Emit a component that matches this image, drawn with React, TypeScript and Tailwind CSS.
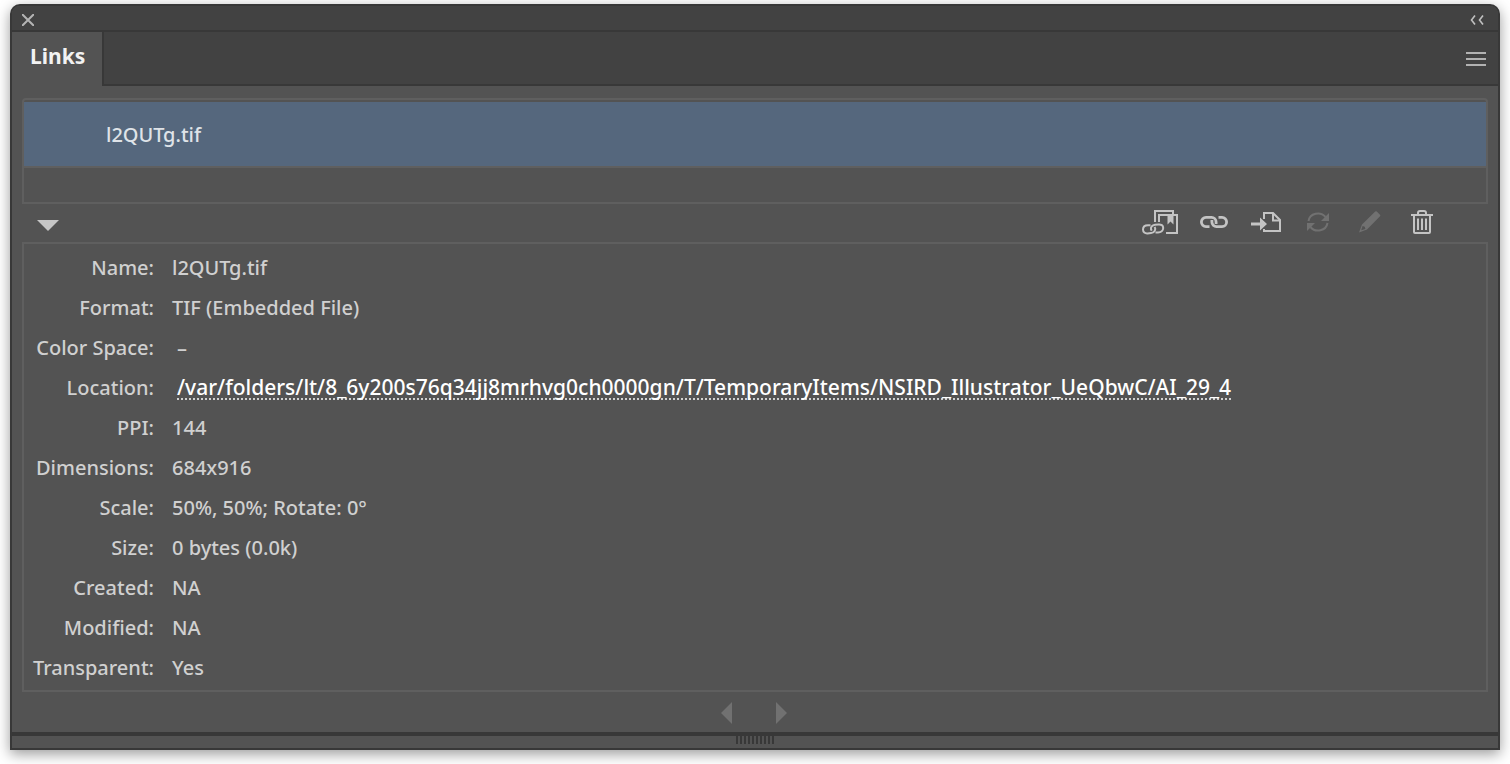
import { clsx } from 'clsx';
import type { ReactNode } from 'react';
import { useState } from 'react';

type LinkDetail = {
  isPath?: boolean;
  label: string;
  value: string;
};

type ToolButtonProps = {
  children: ReactNode;
  disabled?: boolean;
  label: string;
  wide?: boolean;
};

const linkDetails: LinkDetail[] = [
  { label: 'Name:', value: 'l2QUTg.tif' },
  { label: 'Format:', value: 'TIF (Embedded File)' },
  { label: 'Color Space:', value: '–' },
  {
    isPath: true,
    label: 'Location:',
    value:
      '/var/folders/lt/8_6y200s76q34jj8mrhvg0ch0000gn/T/TemporaryItems/NSIRD_Illustrator_UeQbwC/AI_29_4',
  },
  { label: 'PPI:', value: '144' },
  { label: 'Dimensions:', value: '684x916' },
  { label: 'Scale:', value: '50%, 50%; Rotate: 0°' },
  { label: 'Size:', value: '0 bytes (0.0k)' },
  { label: 'Created:', value: 'NA' },
  { label: 'Modified:', value: 'NA' },
  { label: 'Transparent:', value: 'Yes' },
];

function ToolButton({ children, disabled = false, label, wide = false }: ToolButtonProps) {
  return (
    <button
      aria-label={label}
      className={clsx(
        'flex h-9 items-center justify-center',
        wide ? 'w-14' : 'w-[52px]',
        disabled ? 'text-[#717171]' : 'text-[#c4c4c4]',
      )}
      disabled={disabled}
      type="button"
    >
      {children}
    </button>
  );
}

function RelinkLibraryIcon() {
  return (
    <svg aria-hidden="true" fill="none" height="25" stroke="currentColor" strokeWidth="2" viewBox="0 0 36 25" width="36">
      <path d="M13 12V1H31V5" />
      <path d="M17 12V5H35V23H24" />
      <path d="M25.5 5h6v9.5l-3-3-3 3z" fill="currentColor" stroke="none" />
      <path d="M8.5 15.2H6C3 15.2 1 17 1 19.6S3 23.6 5.5 23.4L9 23C12 22.6 13.6 20.5 13.2 18.2L12.6 17" />
      <path d="M13.5 22.4H16C19 22.4 21.2 20.6 21.2 18S19.2 14.2 16.5 14.4L13 14.8C10 15.2 8.6 17.2 9 19.4L9.8 20.6" />
    </svg>
  );
}

function RelinkIcon() {
  return (
    <svg aria-hidden="true" fill="none" height="12" stroke="currentColor" strokeWidth="2.8" viewBox="0 0 28 12" width="28">
      <path d="M9.5 10.6H6A4.6 4.6 0 0 1 6 1.4H11.5A4.6 4.6 0 0 1 16.1 6V8" />
      <path d="M18.5 1.4H22A4.6 4.6 0 0 1 22 10.6H16.5A4.6 4.6 0 0 1 11.9 6V4" />
    </svg>
  );
}

function GoToLinkIcon() {
  return (
    <svg aria-hidden="true" fill="none" height="20" stroke="currentColor" strokeWidth="2" viewBox="0 0 30 20" width="30">
      <path d="M13 7V1H22L29 8V19H13V17" />
      <path d="M22 1V8.5H29" />
      <path d="M0 10.5H9V5.5L16 12L9 18.5V13.5H0Z" fill="currentColor" stroke="none" />
    </svg>
  );
}

function UpdateLinkIcon() {
  return (
    <svg aria-hidden="true" fill="none" height="20" stroke="currentColor" strokeWidth="2" viewBox="0 0 22 20" width="22">
      <path d="M1.5 9A9.5 8.8 0 0 1 18.5 5" />
      <path d="M20.5 11A9.5 8.8 0 0 1 3.5 15" />
      <path d="M22 1V9H14ZM0 19V11H8Z" fill="currentColor" stroke="none" />
    </svg>
  );
}

function EditOriginalIcon() {
  return (
    <svg aria-hidden="true" fill="currentColor" height="22" viewBox="0 0 22 22" width="22">
      <path
        d="M16.2.5Q17 0 17.8.5L21 3.7Q21.7 4.5 21 5.2L8 18.5L0 21.5L3 13.5ZM3.6 15L2.2 19.2L6.4 18L5.8 15.8Z"
        fillRule="evenodd"
      />
    </svg>
  );
}

function TrashIcon() {
  return (
    <svg aria-hidden="true" fill="none" height="24" stroke="currentColor" strokeWidth="2" viewBox="0 0 22 24" width="22">
      <path d="M0 5H22M7 5V3Q7 1 9 1H13Q15 1 15 3V5" />
      <path d="M3 5V22Q3 23 4 23H18Q19 23 19 22V5M7 8.5V20M11 8.5V20M15 8.5V20" />
    </svg>
  );
}

export default function App() {
  const [isDetailOpen, setIsDetailOpen] = useState(true);

  return (
    <div className="px-[10px] pt-1 pb-[14px] font-['Noto_Sans','Open_Sans',sans-serif] text-xl font-medium text-[#d0d0d0]">
      <section
        aria-label="Links"
        className="overflow-hidden rounded-t-[10px] border-2 border-[#383838] bg-[#535353] shadow-[0_4px_14px_rgba(0,0,0,0.4)]"
      >
        <header className="bg-[#424242]">
          <div className="flex h-[26px] items-center justify-between border-b-2 border-[#383838] px-[10px] pt-1">
            <button aria-label="Close" className="text-[#b4b4b4]" type="button">
              <svg aria-hidden="true" height="12" stroke="currentColor" strokeWidth="2" viewBox="0 0 12 12" width="12">
                <path d="M0 0L12 12M12 0L0 12" />
              </svg>
            </button>
            <button aria-label="Collapse panel" className="pr-1 text-[#c0c0c0]" type="button">
              <svg aria-hidden="true" fill="none" height="10" stroke="currentColor" strokeWidth="1.6" viewBox="0 0 14 10" width="14">
                <path d="M5 .5L1.5 5L5 9.5M13 .5L9.5 5L13 9.5" />
              </svg>
            </button>
          </div>
          <div className="flex h-[54px] items-stretch">
            <button
              className="border-r-2 border-[#383838] bg-[#535353] pr-[17px] pb-1 pl-[18px] text-[21px] font-bold text-[#f2f2f2]"
              type="button"
            >
              Links
            </button>
            <div className="flex flex-1 items-center justify-end border-b-2 border-[#383838] pt-[2px] pr-3">
              <button aria-label="Panel menu" className="text-[#b2b2b2]" type="button">
                <svg aria-hidden="true" height="14" stroke="currentColor" strokeWidth="2" viewBox="0 0 20 14" width="20">
                  <path d="M0 1H20M0 7H20M0 13H20" />
                </svg>
              </button>
            </div>
          </div>
        </header>

        <main className="px-[10px] pt-3">
          <ul className="h-[106px] rounded-t border-2 border-[#5f5f5f] pt-[2px]">
            <li className="border-b-2 border-[#5f5f5f]">
              <button
                className="flex h-16 w-full items-center bg-[#55677d] pt-[2px] pl-[82px] text-left text-[#dfe3e8]"
                type="button"
              >
                l2QUTg.tif
              </button>
            </li>
          </ul>

          <div className="flex h-[38px] items-center justify-between pr-10 pl-[14px]">
            <button
              aria-expanded={isDetailOpen}
              aria-label="Show link info"
              className="pt-1 text-[#c6c6c6]"
              type="button"
              onClick={() => setIsDetailOpen((current) => !current)}
            >
              <svg aria-hidden="true" fill="currentColor" height="11" viewBox="0 0 24 11" width="24">
                <path d="M1 0H23L12 11Z" />
              </svg>
            </button>
            <div className="flex pb-[2px]">
              <ToolButton label="Relink from CC Libraries" wide>
                <RelinkLibraryIcon />
              </ToolButton>
              <ToolButton label="Relink">
                <RelinkIcon />
              </ToolButton>
              <ToolButton label="Go to link">
                <GoToLinkIcon />
              </ToolButton>
              <ToolButton disabled label="Update link">
                <UpdateLinkIcon />
              </ToolButton>
              <ToolButton disabled label="Edit original">
                <EditOriginalIcon />
              </ToolButton>
              <ToolButton label="Delete">
                <TrashIcon />
              </ToolButton>
            </div>
          </div>

          {isDetailOpen ? (
            <dl className="border-2 border-[#5f5f5f] pt-1 pb-[2px]">
              {linkDetails.map(({ isPath, label, value }) => (
                <div className="flex h-10 items-center gap-[18px]" key={label}>
                  <dt className="w-[130px] shrink-0 text-right whitespace-nowrap">{label}</dt>
                  <dd className="whitespace-nowrap">
                    {isPath ? (
                      <a
                        className="ml-[5px] block border-b-2 border-dotted border-[#d0d0d0] text-[21px] leading-[22px] text-white"
                        href="#location"
                      >
                        {value}
                      </a>
                    ) : (
                      <span className={value === '–' ? 'pl-[5px]' : undefined}>{value}</span>
                    )}
                  </dd>
                </div>
              ))}
            </dl>
          ) : null}

          <nav aria-label="Linked files" className="flex h-10 items-center justify-center gap-11 pt-[2px] pr-[2px]">
            <button aria-label="Previous link" className="text-[#717171]" disabled type="button">
              <svg aria-hidden="true" fill="currentColor" height="22" viewBox="0 0 11 22" width="11">
                <path d="M11 0V22L0 11Z" />
              </svg>
            </button>
            <button aria-label="Next link" className="text-[#717171]" disabled type="button">
              <svg aria-hidden="true" fill="currentColor" height="22" viewBox="0 0 11 22" width="11">
                <path d="M0 0V22L11 11Z" />
              </svg>
            </button>
          </nav>
        </main>

        <footer className="flex h-4 justify-center border-t-4 border-[#383838]">
          <svg aria-hidden="true" height="8" stroke="#383838" strokeWidth="2" viewBox="0 0 38 8" width="38">
            <path d="M1 0V8M5 0V8M9 0V8M13 0V8M17 0V8M21 0V8M25 0V8M29 0V8M33 0V8M37 0V8" />
          </svg>
        </footer>
      </section>
    </div>
  );
}
